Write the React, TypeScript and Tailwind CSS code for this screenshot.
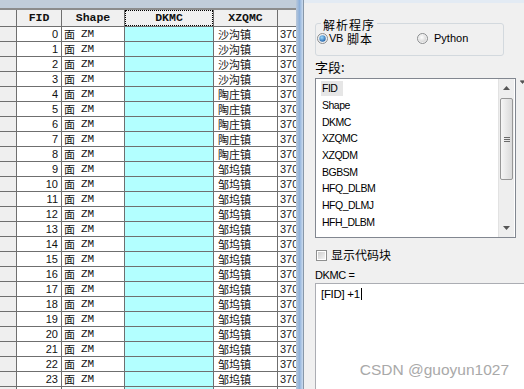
import { ReactNode } from "react";

const rows = Array.from({ length: 25 }, (_, i) => i);

function townOf(i: number) {
  if (i < 4) return "沙沟镇";
  if (i < 9) return "陶庄镇";
  return "邹坞镇";
}

const fields = [
  "FID",
  "Shape",
  "DKMC",
  "XZQMC",
  "XZQDM",
  "BGBSM",
  "HFQ_DLBM",
  "HFQ_DLMJ",
  "HFH_DLBM",
];

/* HEADER CELL */
function Head({ children, focused }: { children?: ReactNode; focused?: boolean }) {
  return (
    <div className="bg-[#f0f0f0] h-[16px] flex items-center justify-center font-['Liberation_Mono',monospace] font-bold text-[11.5px] text-[#111]">
      <div
        className={`w-full h-full flex items-center justify-center ${
          focused ? "border border-dotted border-black" : ""
        }`}
      >
        {children}
      </div>
    </div>
  );
}

function Radio({ checked }: { checked?: boolean }) {
  return (
    <svg width="11" height="11" viewBox="0 0 11 11" className="shrink-0">
      <defs>
        <radialGradient id={checked ? "rOn" : "rOff"} cx="0.4" cy="0.35" r="0.7">
          <stop offset="0" stopColor={checked ? "#9fdcff" : "#ffffff"} />
          <stop offset="1" stopColor={checked ? "#1d5fa8" : "#d4d4d4"} />
        </radialGradient>
      </defs>
      <circle cx="5.5" cy="5.5" r="5" fill="#f2f2f2" stroke="#8a8c8e" strokeWidth="1" />
      <circle cx="5.5" cy="5.5" r={checked ? 3.2 : 3.6} fill={`url(#${checked ? "rOn" : "rOff"})`} />
    </svg>
  );
}

export default function App() {
  return (
    <div className="flex w-[524px] h-[389px] overflow-hidden bg-[#f0f0f0]">
      {/* TABLE */}
      <div className="w-[296px] shrink-0 overflow-hidden flex flex-col">
        <div className="h-[8px] shrink-0 bg-[#c1cdda]" />
        <div className="h-[2px] shrink-0 bg-[#8c8c8c]" />

        <div className="shrink-0 grid grid-cols-[16px_44px_62px_88px_63px_40px] gap-px bg-[#6f6f6f] w-[318px]">
          <Head />
          <Head>FID</Head>
          <Head>Shape</Head>
          <Head focused>DKMC</Head>
          <Head>XZQMC</Head>
          <Head />

          {rows.map((i) => (
            <Row key={i} i={i} />
          ))}
        </div>
      </div>

      {/* WINDOW FRAME */}
      <div className="w-[8px] shrink-0 bg-linear-to-r from-[#b9c8da] via-[#8fb1da] to-[#cbdbee] border-r border-[#8797a8]" />

      {/* DIALOG PANEL */}
      <div className="flex-1 flex flex-col pl-[11px] border-t-[3px] border-[#e3ebf4] font-['Noto_Sans_CJK_SC',sans-serif] text-black">
        {/* GROUP BOX */}
        <div className="relative shrink-0 mt-[20px] w-[189px] h-[33px] border border-[#d3d9de] rounded-[3px]">
          <span className="absolute -top-[5px] left-[5px] px-[2px] bg-[#f0f0f0] text-[12px] leading-[12px] tracking-[1px]">
            解析程序
          </span>
          <div className="flex items-center h-[11px] mt-[9px] pl-[1px]">
            <div className="flex items-center w-[100px]">
              <Radio checked />
              <span className="ml-[1px] font-['Liberation_Sans',sans-serif] text-[11px] leading-[11px] tracking-[-0.4px]">
                VB
              </span>
              <span className="ml-[4px] text-[12px] leading-[11px] tracking-[1px]">脚本</span>
            </div>
            <Radio />
            <span className="ml-[6px] font-['Liberation_Sans',sans-serif] text-[11px] leading-[11px]">
              Python
            </span>
          </div>
        </div>

        <div className="shrink-0 mt-[4px] h-[14px] text-[13px] leading-[14px]">字段:</div>

        {/* FIELD LIST */}
        <div className="shrink-0 flex items-start">
          <div className="mt-[4px] w-[201px] h-[160px] border border-[#828790] bg-white flex">
            <div className="flex-1 pl-[5px] pt-[1.5px] font-['Liberation_Sans',sans-serif] text-[10.5px] tracking-[-0.5px]">
              {fields.map((f, idx) => (
                <div key={f} className="h-[16.67px] flex items-center">
                  <span
                    className={`px-[1px] h-[15px] leading-[15px] ${
                      idx === 0 ? "bg-[#e6e6e6] pr-[6px]" : ""
                    }`}
                  >
                    {f}
                  </span>
                </div>
              ))}
            </div>

            {/* SCROLLBAR */}
            <div className="w-[16px] mr-px flex flex-col bg-[#eeeeee] border-l border-[#e2e2e2]">
              <div className="h-[18px] flex items-center justify-center">
                <svg width="7" height="4" viewBox="0 0 7 4">
                  <path d="M0 4 L3.5 0 L7 4 Z" fill="#555" />
                </svg>
              </div>
              <div className="mt-px mx-[1px] h-[82px] rounded-[2px] border border-[#979797] bg-linear-to-r from-[#f6f6f6] to-[#dadada] flex flex-col items-center justify-center gap-[1px]">
                <div className="w-[6px] h-px bg-[#6a6a6a]" />
                <div className="w-[6px] h-px bg-[#6a6a6a]" />
                <div className="w-[6px] h-px bg-[#6a6a6a]" />
              </div>
              <div className="flex-1" />
              <div className="h-[18px] flex items-center justify-center">
                <svg width="7" height="4" viewBox="0 0 7 4">
                  <path d="M0 0 L7 0 L3.5 4 Z" fill="#555" />
                </svg>
              </div>
            </div>
          </div>
          <svg width="5" height="4" viewBox="0 0 5 4" className="ml-[4px] mt-[6px]">
            <path d="M0 0 H5 M0.5 1 L4.5 1 L2.5 3.5 Z" stroke="#555" strokeWidth="0.8" fill="#555" />
          </svg>
        </div>

        {/* SHOW CODE BLOCK */}
        <div className="shrink-0 mt-[10px] h-[14px] flex items-center pl-[1px]">
          <div className="w-[11px] h-[11px] border border-[#8e8f8f] bg-white p-[1px]">
            <div className="w-full h-full bg-linear-to-br from-[#cfcfcf] to-[#f4f4f4]" />
          </div>
          <span className="ml-[4px] text-[12px] leading-[14px]">显示代码块</span>
        </div>

        <div className="shrink-0 mt-[6px] h-[14px] font-['Liberation_Sans',sans-serif] text-[11px] leading-[14px] tracking-[-0.4px]">
          DKMC =
        </div>

        {/* EXPRESSION BOX */}
        <div className="relative mt-[1px] flex-1 border-l border-t border-[#abadb3] bg-white pl-[5px] pt-[3px]">
          <div className="flex items-center h-[14px] font-['Liberation_Sans',sans-serif] text-[11.5px] leading-[14px] tracking-[-0.3px]">
            <span>[FID] +1</span>
            <span className="ml-px w-px h-[12px] bg-black" />
          </div>
          <div className="absolute right-[16px] top-[77px] font-['Liberation_Sans',sans-serif] text-[15.5px] leading-[18px] text-[#a9a9a9] [text-shadow:0_0_2px_#ffffff]">
            CSDN @guoyun1027
          </div>
        </div>
      </div>
    </div>
  );
}

/* DATA ROW */
function Row({ i }: { i: number }) {
  return (
    <>
      <div className="bg-[#efefef] h-[14px]" />
      <div className="bg-white h-[14px] flex items-center justify-end pr-[3px] font-['Liberation_Sans',sans-serif] text-[11px] leading-[14px] text-[#111]">
        {i}
      </div>
      <div className="bg-white h-[14px] flex items-center pl-[2px] text-[#111] text-[11px] leading-[14px]">
        <span className="font-['Noto_Sans_CJK_SC',sans-serif]">面</span>
        <span className="ml-[6px] font-['Liberation_Mono',monospace]">ZM</span>
      </div>
      <div className="bg-[#b3ffff] h-[14px]" />
      <div className="bg-white h-[14px] flex items-center pl-[4px] font-['Noto_Sans_CJK_SC',sans-serif] text-[11px] leading-[14px] text-[#111]">
        {townOf(i)}
      </div>
      <div className="bg-white h-[14px] flex items-center pl-[2px] font-['Liberation_Sans',sans-serif] text-[11px] leading-[14px] text-[#222]">
        370
      </div>
    </>
  );
}
